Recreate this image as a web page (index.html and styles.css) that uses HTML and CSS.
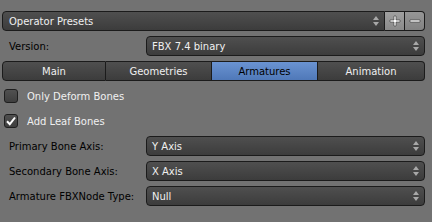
FILE: index.html
```html
<!DOCTYPE html>
<html>
<head>
<meta charset="utf-8">
<link rel="stylesheet" href="styles.css">
</head>
<body>
<div class="panel">
  <div class="row presets">
    <div class="menu grow"><span class="txt">Operator Presets</span><span class="arrows"><i class="up"></i><i class="dn"></i></span></div>
    <div class="tool plus"><svg width="14" height="14" viewBox="0 0 14 14"><path d="M6 2h2v4h4v2H8v4H6V8H2V6h4z" fill="#fff" stroke="#333" stroke-width="0.6"/></svg></div>
    <div class="tool minus"><svg width="14" height="14" viewBox="0 0 14 14"><path d="M2 6h10v2H2z" fill="#fff" stroke="#333" stroke-width="0.6"/></svg></div>
  </div>
  <div class="row field">
    <span class="label">Version:</span>
    <div class="menu grow"><span class="txt">FBX 7.4 binary</span><span class="arrows"><i class="up"></i><i class="dn"></i></span></div>
  </div>
  <div class="row tabs">
    <div class="tab">Main</div>
    <div class="tab">Geometries</div>
    <div class="tab active">Armatures</div>
    <div class="tab">Animation</div>
  </div>
  <div class="row check">
    <span class="box"></span><span class="ctext">Only Deform Bones</span>
  </div>
  <div class="row check">
    <span class="box"><svg width="14" height="14" viewBox="0 0 14 14"><path d="M3 7.2l2.8 3L11 3.5" fill="none" stroke="#fff" stroke-width="2"/></svg></span><span class="ctext">Add Leaf Bones</span>
  </div>
  <div class="row field">
    <span class="label">Primary Bone Axis:</span>
    <div class="menu grow"><span class="txt">Y Axis</span><span class="arrows"><i class="up"></i><i class="dn"></i></span></div>
  </div>
  <div class="row field">
    <span class="label">Secondary Bone Axis:</span>
    <div class="menu grow"><span class="txt">X Axis</span><span class="arrows"><i class="up"></i><i class="dn"></i></span></div>
  </div>
  <div class="row field">
    <span class="label">Armature FBXNode Type:</span>
    <div class="menu grow"><span class="txt">Null</span><span class="arrows"><i class="up"></i><i class="dn"></i></span></div>
  </div>
</div>
</body>
</html>
```

FILE: styles.css
```css
html, body {
  margin: 0;
  padding: 0;
  background: #727272;
  width: 432px;
  height: 222px;
  overflow: hidden;
}
.panel {
  padding: 11px 7px 0 2px;
  display: flex;
  flex-direction: column;
  gap: 5px;
  font-family: "DejaVu Sans", sans-serif;
  font-size: 10px;
}
.row {
  height: 20px;
  display: flex;
  align-items: center;
}
.grow { flex: 1; }
.menu {
  height: 20px;
  box-sizing: border-box;
  border: 1px solid #1b1b1b;
  border-radius: 4px;
  background: linear-gradient(#4f4f4f, #3c3c3c);
  color: #f0f0f0;
  display: flex;
  align-items: center;
  justify-content: space-between;
  padding: 0 5px 0 6px;
}
.presets .menu {
  border-radius: 4px 0 0 4px;
  padding-left: 6px;
}
.txt { white-space: nowrap; }
.arrows {
  display: flex;
  flex-direction: column;
  gap: 2px;
  align-items: center;
}
.arrows i {
  display: block;
  width: 0;
  height: 0;
  border-left: 3px solid transparent;
  border-right: 3px solid transparent;
}
.arrows .up { border-bottom: 4px solid #a8a8a8; }
.arrows .dn { border-top: 4px solid #a8a8a8; }
.tool {
  width: 20px;
  height: 20px;
  box-sizing: border-box;
  border: 1px solid #1b1b1b;
  border-left: none;
  background: linear-gradient(#a0a0a0, #8a8a8a);
  display: flex;
  align-items: center;
  justify-content: center;
}
.tool.minus {
  border-radius: 0 4px 4px 0;
  background: linear-gradient(#969696, #828282);
}
.label {
  width: 144px;
  flex: none;
  box-sizing: border-box;
  padding-left: 7px;
  color: #000;
  white-space: nowrap;
}
.field .menu { padding-left: 5px; }
.tabs .tab {
  flex: none;
  width: 106px;
  height: 20px;
  box-sizing: border-box;
  border: 1px solid #1b1b1b;
  border-left: none;
  background: linear-gradient(#4f4f4f, #3c3c3c);
  color: #f0f0f0;
  display: flex;
  align-items: center;
  justify-content: center;
}
.tabs .tab:first-child {
  width: 104px;
  border-left: 1px solid #1b1b1b;
  border-radius: 4px 0 0 4px;
}
.tabs .tab:last-child {
  flex: 1;
  border-radius: 0 4px 4px 0;
}
.tabs .tab.active {
  background: linear-gradient(#6a93d2, #4f78b8);
  color: #000;
}
.check { padding-left: 2px; }
.box {
  width: 14px;
  height: 14px;
  box-sizing: border-box;
  border: 1px solid #1e1e1e;
  border-radius: 3px;
  background: linear-gradient(#505050, #3e3e3e);
  display: flex;
  align-items: center;
  justify-content: center;
}
.box svg { flex: none; }
.ctext {
  margin-left: 9px;
  color: #f0f0f0;
  white-space: nowrap;
}
```
